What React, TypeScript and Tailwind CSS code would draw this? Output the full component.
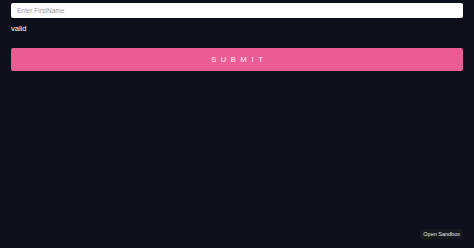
export default function App() {
  return (
    <div className="relative h-screen w-full bg-[#0d101a] font-['Liberation_Sans',Arial,sans-serif]">
      <div className="flex flex-col px-[11px] pt-[3px]">
        <input
          type="text"
          placeholder="Enter FirstName"
          className="h-[15px] w-full rounded-[2px] border-0 bg-white px-[6px] text-[6.5px] text-gray-800 outline-none placeholder:text-[#9a9a9a]"
        />
        <div className="mt-[4px] h-[14px] text-[7.5px] leading-[14px] text-white">valid</div>
        <button className="mt-[12px] h-[23px] w-full rounded-[2px] bg-[#eb5c95] pl-[0.6em] text-[7.5px] tracking-[0.62em] text-white/90">
          SUBMIT
        </button>
      </div>
      <button className="absolute bottom-[9px] right-[11px] h-[10px] rounded-[2px] bg-[#17191f] px-[3px] text-[5.5px] leading-[10px] text-gray-200">
        Open Sandbox
      </button>
    </div>
  )
}
